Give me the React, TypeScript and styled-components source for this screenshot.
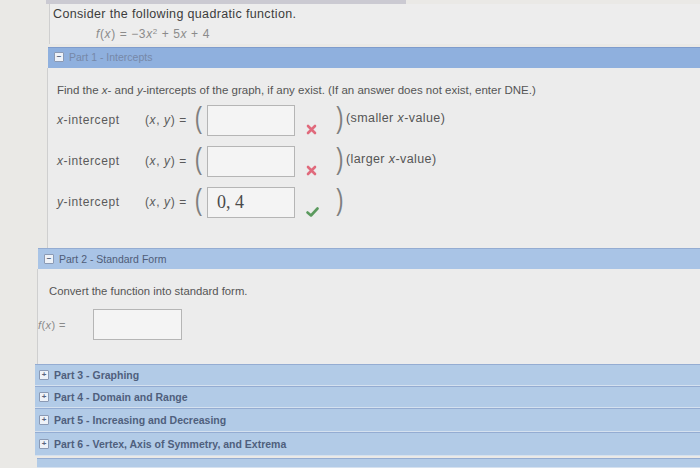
import React from "react";
import styled, { createGlobalStyle } from "styled-components";

const Global = createGlobalStyle`
  html, body { margin: 0; padding: 0; }
  body {
    background: #eae9e6;
    font-family: "Liberation Sans", Arial, sans-serif;
    color: #444;
  }
`;

const Page = styled.div`
  width: 700px;
  height: 468px;
  overflow: hidden;
  display: flex;
  flex-direction: column;
  background: #eae9e6;
`;

const TopStrip = styled.div`
  margin-left: 46px;
  width: 360px;
  height: 4px;
  background: #cbcad2;
`;

const Intro = styled.div<{ $indent: number }>`
  margin-left: ${(p) => p.$indent}px;
  border-left: 1px solid #cfcfcf;
  background: #ededed;
  padding: 2px 0 0 3px;
  height: 40px;
  box-sizing: border-box;
  display: flex;
  flex-direction: column;
`;

const IntroText = styled.div`
  font-size: 12.5px;
  color: #3c3c3c;
  letter-spacing: 0.35px;
  line-height: 16px;
`;

const Formula = styled.div`
  margin: 5px 0 0 43px;
  font-size: 12px;
  color: #8b8b8b;
  letter-spacing: 0.6px;
  line-height: 15px;
  i { font-style: italic; }
  sup { font-size: 8px; vertical-align: 4px; line-height: 0; }
`;

const Bar = styled.div<{ $indent: number; $tone: "dark" | "mid" | "light"; $h: number }>`
  margin-left: ${(p) => p.$indent}px;
  height: ${(p) => p.$h}px;
  display: flex;
  align-items: center;
  gap: 5px;
  padding-left: ${(p) => (p.$tone === "light" ? 4 : 6)}px;
  box-sizing: border-box;
  background: ${(p) =>
    p.$tone === "dark" ? "#8fb0de" : p.$tone === "mid" ? "#a9c4e6" : "#b2cbe7"};
  border-top: 1px solid ${(p) => (p.$tone === "dark" ? "#7f9ccc" : "#94acd2")};
  border-bottom: 1px solid ${(p) => (p.$tone === "light" ? "#d5e1ef" : "transparent")};
  font-size: 10.5px;
  font-weight: ${(p) => (p.$tone === "light" ? 700 : 400)};
  color: ${(p) => (p.$tone === "dark" ? "#7688a8" : p.$tone === "mid" ? "#4f5d78" : "#4f5f7d")};
`;

const ToggleIcon = styled.span`
  width: 8px;
  height: 8px;
  border: 1px solid #8b9ab4;
  background: #eef2f8;
  border-radius: 1px;
  display: inline-flex;
  align-items: center;
  justify-content: center;
  font-size: 8px;
  line-height: 8px;
  font-weight: 700;
  color: #56657f;
`;

const Body = styled.div<{ $indent: number; $h: number }>`
  margin-left: ${(p) => p.$indent}px;
  height: ${(p) => p.$h}px;
  border-left: 1px solid #cfcfcf;
  background: #ececec;
  box-sizing: border-box;
  display: flex;
  flex-direction: column;
`;

const Instruction = styled.div<{ $pad: number; $top: number; $size: number }>`
  padding: ${(p) => p.$top}px 0 0 ${(p) => p.$pad}px;
  font-size: ${(p) => p.$size}px;
  color: #555;
  line-height: 14px;
  i { font-style: italic; }
`;

const Rows = styled.div`
  display: flex;
  flex-direction: column;
  gap: 10px;
  padding: 8px 0 0 9px;
`;

const Row = styled.div`
  display: grid;
  grid-template-columns: 88px 48px 14px 88px 40px 10px auto;
  align-items: center;
  height: 31px;
`;

const Label = styled.span`
  font-size: 12px;
  letter-spacing: 0.6px;
  color: #5a5a5a;
  white-space: nowrap;
  i { font-style: italic; }
`;

const Paren = styled.span`
  font-family: "Liberation Sans", sans-serif;
  font-weight: 400;
  font-size: 29px;
  color: #7f7f7f;
  line-height: 31px;
  transform: scaleX(0.75);
  margin-top: -4px;
`;

const Box = styled.div<{ $w?: number }>`
  width: ${(p) => p.$w ?? 88}px;
  height: 31px;
  box-sizing: border-box;
  border: 1px solid #b5b5b5;
  background: #f4f4f4;
  display: flex;
  align-items: center;
  padding-left: 9px;
  font-family: "Liberation Serif", "Times New Roman", serif;
  font-size: 18px;
  color: #4a4a4a;
`;

const MarkCell = styled.div`
  display: flex;
  justify-content: flex-start;
  align-items: center;
  height: 31px;
  padding: 19px 0 0 11px;
  box-sizing: border-box;
`;

const Note = styled.span`
  font-size: 12.5px;
  letter-spacing: 0.4px;
  color: #555;
  padding-left: 1px;
  margin-top: -4px;
  white-space: nowrap;
  i { font-style: italic; }
`;

const FRow = styled.div`
  display: flex;
  align-items: center;
  gap: 13px;
  padding: 11px 0 0 0;
`;

const FLabel = styled.span`
  font-size: 11px;
  color: #8a8a8a;
  width: 42px;
  letter-spacing: 0.4px;
  i { font-style: italic; }
`;

const Gap = styled.div<{ $h: number }>`
  height: ${(p) => p.$h}px;
`;

const Cross = () => (
  <svg width="11" height="11" viewBox="0 0 11 11">
    <path d="M2 2 L9 9 M9 2 L2 9" stroke="#e06a7c" strokeWidth="2.6" strokeLinecap="round" />
  </svg>
);

const Check = () => (
  <svg width="13" height="10" viewBox="0 0 13 10">
    <path d="M1.5 5.5 L5 8.5 L11.5 1.5" stroke="#5b9a5e" strokeWidth="2.6" fill="none" strokeLinecap="round" strokeLinejoin="round" />
  </svg>
);

const XY = () => (
  <Label>
    (<i>x</i>, <i>y</i>) =
  </Label>
);

const lowerParts = [
  { n: 3, t: "Graphing", h: 22 },
  { n: 4, t: "Domain and Range", h: 23 },
  { n: 5, t: "Increasing and Decreasing", h: 24 },
  { n: 6, t: "Vertex, Axis of Symmetry, and Extrema", h: 24 },
];

export default function App() {
  return (
    <Page>
      <Global />
      <TopStrip />
      <Intro $indent={49}>
        <IntroText>Consider the following quadratic function.</IntroText>
        <Formula>
          <i>f</i>(<i>x</i>) = −3<i>x</i>
          <sup>2</sup> + 5<i>x</i> + 4
        </Formula>
      </Intro>
      <Gap $h={3} />
      <Bar $indent={48} $tone="dark" $h={21}>
        <ToggleIcon>−</ToggleIcon>
        Part 1 - Intercepts
      </Bar>
      <Body $indent={47} $h={182}>
        <Instruction $pad={9} $top={15} $size={11.5}>
          Find the <i>x</i>- and <i>y</i>-intercepts of the graph, if any exist. (If an answer does not exist, enter DNE.)
        </Instruction>
        <Rows>
          <Row>
            <Label>
              <i>x</i>-intercept
            </Label>
            <XY />
            <Paren>(</Paren>
            <Box />
            <MarkCell>
              <Cross />
            </MarkCell>
            <Paren>)</Paren>
            <Note>
              (smaller <i>x</i>-value)
            </Note>
          </Row>
          <Row>
            <Label>
              <i>x</i>-intercept
            </Label>
            <XY />
            <Paren>(</Paren>
            <Box />
            <MarkCell>
              <Cross />
            </MarkCell>
            <Paren>)</Paren>
            <Note>
              (larger <i>x</i>-value)
            </Note>
          </Row>
          <Row>
            <Label>
              <i>y</i>-intercept
            </Label>
            <XY />
            <Paren>(</Paren>
            <Box>0, 4</Box>
            <MarkCell>
              <Check />
            </MarkCell>
            <Paren>)</Paren>
            <Note />
          </Row>
        </Rows>
      </Body>
      <Bar $indent={38} $tone="mid" $h={21}>
        <ToggleIcon>−</ToggleIcon>
        Part 2 - Standard Form
      </Bar>
      <Body $indent={37} $h={95}>
        <Instruction $pad={11} $top={15} $size={11.3}>
          Convert the function into standard form.
        </Instruction>
        <FRow>
          <FLabel>
            <i>f</i>(<i>x</i>) =
          </FLabel>
          <Box $w={89} />
        </FRow>
      </Body>
      {lowerParts.map((p) => (
        <Bar key={p.n} $indent={35} $tone="light" $h={p.h}>
          <ToggleIcon>+</ToggleIcon>
          Part {p.n} - {p.t}
        </Bar>
      ))}
      <Gap $h={2} />
      <Bar $indent={37} $tone="light" $h={10} />
    </Page>
  );
}
